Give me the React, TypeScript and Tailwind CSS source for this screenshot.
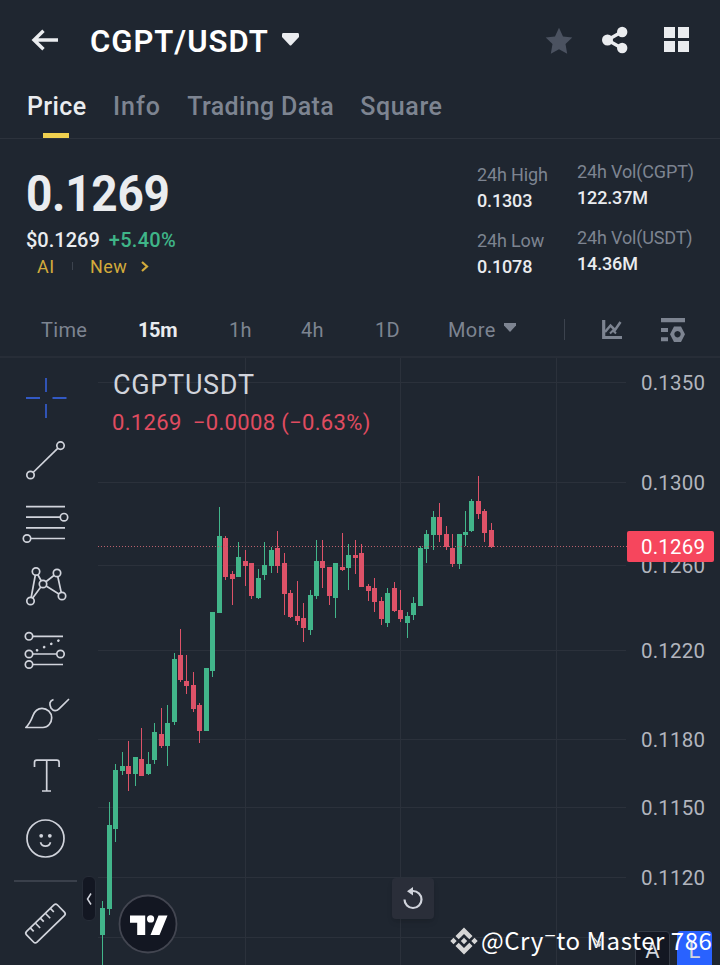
import { useState } from 'react';

type Candle = [x: number, high: number, top: number, bottom: number, low: number, up: 0 | 1];

const candles: Candle[] = [
  [102.5, 901, 908, 935, 966, 1],
  [109.5, 802, 825, 909, 915, 1],
  [115.5, 764, 770, 829, 842, 1],
  [122.5, 752, 766, 771, 775, 1],
  [128.5, 741, 766, 774, 791, 0],
  [135.5, 757, 757, 774, 786, 1],
  [141.5, 728, 759, 776, 776, 0],
  [148.5, 752, 764, 774, 775, 1],
  [154.5, 723, 732, 760, 764, 1],
  [161.5, 708, 734, 746, 748, 0],
  [167.5, 705, 723, 746, 766, 1],
  [174.5, 653, 659, 722, 725, 1],
  [180.5, 629, 655, 680, 682, 0],
  [186.5, 655, 681, 686, 694, 0],
  [193.5, 672, 685, 709, 712, 0],
  [199.5, 703, 705, 731, 743, 0],
  [206.5, 668, 668, 731, 731, 1],
  [212.5, 612, 612, 671, 677, 1],
  [219.5, 507, 536, 613, 613, 1],
  [225.5, 536, 538, 577, 580, 0],
  [232.5, 571, 574, 579, 605, 0],
  [238.5, 542, 557, 577, 577, 1],
  [245.5, 550, 561, 566, 586, 0],
  [251.5, 563, 563, 596, 599, 0],
  [258.5, 569, 578, 598, 599, 1],
  [264.5, 542, 565, 575, 580, 1],
  [271.5, 547, 550, 566, 573, 1],
  [277.5, 531, 548, 566, 573, 0],
  [284.5, 553, 563, 594, 615, 0],
  [290.5, 590, 593, 617, 618, 0],
  [297.5, 581, 616, 621, 625, 0],
  [303.5, 603, 618, 628, 642, 0],
  [310.5, 590, 595, 630, 635, 1],
  [316.5, 540, 561, 596, 599, 1],
  [322.5, 540, 561, 568, 588, 0],
  [329.5, 567, 567, 596, 605, 0],
  [335.5, 563, 563, 598, 618, 1],
  [342.5, 533, 567, 570, 571, 0],
  [348.5, 544, 555, 568, 590, 1],
  [355.5, 540, 555, 558, 574, 0],
  [361.5, 544, 553, 587, 587, 0],
  [368.5, 584, 586, 591, 601, 0],
  [374.5, 578, 588, 602, 612, 0],
  [381.5, 597, 601, 619, 625, 0],
  [387.5, 588, 593, 623, 627, 1],
  [394.5, 582, 588, 611, 612, 0],
  [400.5, 590, 610, 619, 622, 0],
  [407.5, 612, 616, 623, 638, 1],
  [413.5, 597, 603, 615, 620, 1],
  [420.5, 546, 548, 606, 606, 1],
  [426.5, 530, 534, 549, 563, 1],
  [433.5, 511, 517, 535, 550, 1],
  [439.5, 503, 517, 535, 542, 0],
  [446.5, 526, 534, 547, 550, 0],
  [452.5, 534, 548, 564, 567, 0],
  [459.5, 534, 534, 564, 569, 1],
  [465.5, 511, 532, 535, 546, 1],
  [471.5, 499, 501, 531, 532, 1],
  [478.5, 476, 501, 514, 519, 0],
  [484.5, 509, 511, 533, 542, 0],
  [491.5, 523, 530, 547, 548, 0],
];

const levels = [
  { y: 383, label: '0.1350' },
  { y: 483, label: '0.1300' },
  { y: 566, label: '0.1260' },
  { y: 651, label: '0.1220' },
  { y: 740, label: '0.1180' },
  { y: 808, label: '0.1150' },
  { y: 878, label: '0.1120' },
];

const tabs = [
  { name: 'Price', cls: 'tracking-[0.4px]' },
  { name: 'Info', cls: 'tracking-[1px]' },
  { name: 'Trading Data', cls: 'tracking-[0.35px]' },
  { name: 'Square', cls: 'tracking-[0.6px]' },
];

const intervals = [
  { name: 'Time', cls: 'w-[97px]' },
  { name: '15m', cls: 'w-[91px]' },
  { name: '1h', cls: 'w-[72px]' },
  { name: '4h', cls: 'w-[74px]' },
  { name: '1D', cls: 'w-[73px]' },
];

function Node({ x, y }: { x: number; y: number }) {
  return <circle cx={x} cy={y} r="3.7" fill="#1f2630" />;
}

const tools = [
  {
    name: 'cross',
    icon: <path d="M46 11v14M46 37v14M26 31h14M52.500 31h14" stroke="#3259c4" strokeWidth="1.8" />,
  },
  {
    name: 'trend',
    icon: (
      <>
        <path d="M30.500 45L60.500 15.600" />
        <Node x={60.5} y={15.6} />
        <Node x={30.5} y={45} />
      </>
    ),
  },
  {
    name: 'fib',
    icon: (
      <>
        <path d="M26 13.600h39M26 24.200h38M26 34.900h39M27 45.500h38" />
        <Node x={64} y={24.2} />
        <Node x={27} y={45.5} />
      </>
    ),
  },
  {
    name: 'pattern',
    icon: (
      <>
        <path d="M36 15.500L30.500 45L43 28L36 15.500M43 28L57 17L62 40L43 28" />
        <Node x={36} y={15.5} />
        <Node x={57} y={17} />
        <Node x={43} y={28} />
        <Node x={30.5} y={45} />
        <Node x={62} y={40} />
      </>
    ),
  },
  {
    name: 'forecast',
    icon: (
      <>
        <path d="M29 17.300h34M29 35h31M29 45.500h34" />
        <path d="M37 31.300L61 20.500" strokeWidth="2.6" strokeLinecap="round" strokeDasharray="0.1 7.700" />
        <Node x={29} y={17.3} />
        <Node x={29} y={35} />
        <Node x={60.5} y={35} />
        <Node x={29} y={45.5} />
      </>
    ),
  },
  {
    name: 'brush',
    icon: (
      <path
        d="M25.800 45.500H43c5 0 8.700-4.800 8.700-9.800S47.400 26.300 42 26.300c-5 0-7.500 3.200-9 7.200s-3.500 8.500-7.200 12zM53.500 17.500c-4 1.500-4.500 4.500-2.500 8.500c2.300 3.200 5.300 3.600 8 .8L69 17"
        strokeLinejoin="round"
      />
    ),
  },
  {
    name: 'text',
    icon: <path d="M34.500 22v-4.500q0-2.300 2.300-2.300h20q2.300 0 2.300 2.300V22M46.700 15.500V46M42 46h9" />,
  },
  {
    name: 'emoji',
    icon: (
      <>
        <circle cx="45.500" cy="30.500" r="18.500" />
        <circle cx="41.200" cy="27.800" r="1.900" fill="#d1d4dc" stroke="none" />
        <circle cx="49.800" cy="27.800" r="1.900" fill="#d1d4dc" stroke="none" />
        <path d="M40.500 34.200c1.500 5.200 8.500 5.200 10 0" />
      </>
    ),
  },
];

function Header() {
  return (
    <header className="flex h-[79px] items-center pl-[31px] pr-[31px]">
      <svg className="h-[22px] w-[28px]" viewBox="0 0 28 22" fill="none" stroke="#eaecef" strokeWidth="3.400">
        <path d="M27 11H3M12.500 1.800L3 11l9.500 9.200" />
      </svg>
      <h1 className="ml-[31px] w-[178px] whitespace-nowrap pt-1 text-[31px] font-semibold leading-none tracking-[1px] text-white">
        CGPT/USDT
      </h1>
      <svg className="ml-[14px] h-[13px] w-[17px]" viewBox="0 0 17 13" fill="#eaecef">
        <path d="M1 0h15q1 0 1 1.500v2.500L9.500 12q-1 1-2 0L0 4V1.500Q0 0 1 0z" />
      </svg>
      <div className="ml-auto flex items-center">
        <svg className="mt-[2px] h-[28px] w-[28px]" viewBox="0 0 28 28" fill="#4b5260">
          <path d="M14 .8l4 8.600 9.300 1.200-6.800 6.500 1.700 9.700L14 22.300 5.800 26.800l1.700-9.700L.7 10.600 10 9.400z" />
        </svg>
        <svg className="ml-[28px] h-[28px] w-[27px]" viewBox="0 0 27 28" fill="#eaecef" stroke="#eaecef">
          <path d="M20.500 6L6.500 14l14 8" fill="none" strokeWidth="3.400" />
          <circle cx="21.200" cy="6" r="5.200" stroke="none" />
          <circle cx="6.500" cy="14" r="5.500" stroke="none" />
          <circle cx="21.200" cy="22" r="5.200" stroke="none" />
        </svg>
        <svg className="ml-[36px] h-[25px] w-[25px]" viewBox="0 0 25 25" fill="#eaecef">
          <path d="M0 0h11v11H0zM14 0h11v11H14zM0 14h11v11H0zM14 14h11v11H14z" />
        </svg>
      </div>
    </header>
  );
}

function Stat({ label, value }: { label: string; value: string }) {
  return (
    <div className="h-[66px] whitespace-nowrap">
      <div className="text-[18px] leading-[26px] tracking-[-0.15px] text-[#7d8491]">{label}</div>
      <div className="text-[18px] font-medium leading-[26px] tracking-[-0.15px] text-[#eaecef]">{value}</div>
    </div>
  );
}

function PriceSummary() {
  return (
    <section className="flex h-[164px]">
      <div className="w-[477px] pl-[26px] pt-[30px]">
        <div className="origin-left scale-x-[0.92] text-[50px] font-bold leading-[50px] tracking-[-0.3px] text-[#eaecef]">0.1269</div>
        <div className="mt-[8px] flex h-[26px] items-center gap-[9px] text-[20px] font-medium">
          <span className="text-[#eaecef]">$0.1269</span>
          <span className="tracking-[0.3px] text-[#3fb588]">+5.40%</span>
        </div>
        <div className="flex h-[26px] items-center pl-[11px] text-[18px] tracking-[0.4px] text-[#d3ab3b]">
          <span className="w-[19px]">AI</span>
          <span className="ml-[16px] h-[8px] w-px bg-[#3c434e]" />
          <span className="ml-[17px]">New</span>
          <svg className="ml-[14px] h-[11px] w-[8px]" viewBox="0 0 8 11" fill="none" stroke="currentColor" strokeWidth="2.200">
            <path d="M1 1l5 4.500-5 4.500" />
          </svg>
        </div>
      </div>
      <div className="w-[100px] pt-[23px]">
        <Stat label="24h High" value="0.1303" />
        <Stat label="24h Low" value="0.1078" />
      </div>
      <div className="pt-[20px]">
        <Stat label="24h Vol(CGPT)" value="122.37M" />
        <Stat label="24h Vol(USDT)" value="14.36M" />
      </div>
    </section>
  );
}

function IntervalBar({ active, onSelect }: { active: string; onSelect: (name: string) => void }) {
  return (
    <div className="flex h-[55px] items-center border-b-2 border-[#272d37] pl-[41px] text-[20px] text-[#7d8491]">
      {intervals.map((item) => (
        <button
          key={item.name}
          onClick={() => onSelect(item.name)}
          className={`${item.cls} text-left ${item.name === active ? 'font-bold tracking-[-0.4px] text-[#eaecef]' : 'tracking-[0.3px]'}`}
        >
          {item.name}
        </button>
      ))}
      <button className="flex w-[116px] items-center gap-[8px] tracking-[0.4px]">
        More
        <svg className="-mt-[4px] h-[9px] w-[12px]" viewBox="0 0 12 9" fill="currentColor">
          <path d="M0 0h12v2.500L6 9 0 2.500z" />
        </svg>
      </button>
      <span className="h-[21px] w-px bg-[#3c434e]" />
      <svg className="ml-[37px] h-[21px] w-[20px]" viewBox="0 0 20 21" fill="none" stroke="currentColor">
        <path d="M1.700 1v17.500H20" strokeWidth="3.200" />
        <path d="M3 13l5.500-6.500 4.500 4.500L18.500 3" strokeWidth="2.500" />
        <path d="M8 14.500l3-3 3 3" strokeWidth="2" />
      </svg>
      <svg className="ml-[38px] h-[26px] w-[26px]" viewBox="0 0 26 26" fill="currentColor">
        <path d="M1 1h24v4.300H1zM1 11h7v4H1zM1 20.300h7v4H1z" />
        <path fillRule="evenodd" d="M14 9.500h7l4 7.700-4 7.800h-7l-4-7.800zM17.500 14a3.200 3.200 0 1 0 .01 0z" />
      </svg>
    </div>
  );
}

function Chart() {
  return (
    <svg className="block h-[607px] w-[628px]" viewBox="92 358 628 607">
      <g stroke="#2b313b" strokeWidth="1">
        {levels.map((level) => (
          <path key={level.label} d={`M98 ${level.y - 0.5}H626`} />
        ))}
        <path d="M98 937.500H626M245.500 357V965M400.500 357V965M556.500 357V965" />
      </g>
      {candles.map(([x, high, top, bottom, low, up]) => (
        <g key={x} fill={up ? '#42b58a' : '#dd5268'}>
          <rect x={x - 0.5} y={high} width="1" height={low - high} />
          <rect x={x - 2.5} y={top} width="5" height={bottom - top} />
        </g>
      ))}
      <path d="M98 546.500H627" stroke="#b9606c" strokeDasharray="1 2" />
      <g fill="#b2b5be" fontSize="20.500">
        {levels.map((level) => (
          <text key={level.label} x="641" y={level.y + 7} textLength="64">
            {level.label}
          </text>
        ))}
      </g>
      <rect x="627" y="531" width="87" height="31" rx="2" fill="#f6465d" />
      <text x="641" y="554" fontSize="20.500" fill="#fff" textLength="64">
        0.1269
      </text>
      <circle cx="148" cy="924" r="28.500" fill="#131722" stroke="#434651" strokeWidth="1.800" />
      <path d="M130 915.500h15.200V935h-8v-12.300H130zM158.500 915.500h9L159.500 935h-9z" fill="#fff" />
      <circle cx="150.600" cy="918.900" r="3.600" fill="#fff" />
    </svg>
  );
}

function Toolbar() {
  return (
    <aside className="w-[92px] pt-[9px]">
      {tools.map((tool) => (
        <svg key={tool.name} className="block h-[63px] w-[92px]" viewBox="0 0 92 63" fill="none" stroke="#d1d4dc" strokeWidth="1.700">
          {tool.icon}
        </svg>
      ))}
      <div className="ml-[14px] mt-[9px] h-[2px] w-[63px] bg-[#3a404b]" />
      <svg className="block h-[80px] w-[92px]" viewBox="0 882 92 80" fill="none" stroke="#d1d4dc" strokeWidth="1.700">
        <g transform="rotate(-44 45.500 923.500)">
          <rect x="24" y="916" width="43" height="15" rx="2.500" />
          <path d="M31.500 916v5M38.500 916v7M45.500 916v5M52.500 916v7M59.500 916v5" />
        </g>
      </svg>
    </aside>
  );
}

export default function App() {
  const [tab, setTab] = useState('Price');
  const [interval, setInterval] = useState('15m');

  return (
    <div className="relative h-[965px] w-[720px] overflow-hidden bg-[#1f2630] font-[Roboto,sans-serif]">
      <Header />
      <nav className="flex h-[60px] gap-[26.3px] border-b border-[#2c323c] pl-[27px] text-[25px] font-medium">
        {tabs.map((item) => (
          <button
            key={item.name}
            onClick={() => setTab(item.name)}
            className={`flex flex-col items-center whitespace-nowrap pt-[10px] ${item.cls} ${item.name === tab ? 'text-[#eaecef]' : 'text-[#7d8491]'}`}
          >
            <span className="leading-[36px]">{item.name}</span>
            {item.name === tab && <span className="mr-[2px] mt-[8px] h-[5px] w-[26px] bg-[#f0d04f]" />}
          </button>
        ))}
      </nav>
      <PriceSummary />
      <IntervalBar active={interval} onSelect={setInterval} />

      <main className="flex h-[607px]">
        <Toolbar />
        <Chart />
      </main>

      {/* Symbol legend over the chart */}
      <div className="absolute left-[112px] top-[368px] whitespace-nowrap">
        <div className="pl-px text-[27px] leading-[34px] tracking-[0.7px] text-[#d1d4dc]">CGPTUSDT</div>
        <div className="mt-[7px] flex gap-[11px] text-[22px] leading-[28px] tracking-[0.35px] text-[#e04c60]">
          <span>0.1269</span>
          <span>−0.0008 (−0.63%)</span>
        </div>
      </div>

      <button className="absolute left-[82px] top-[876px] flex h-[45px] w-[14px] items-center justify-center rounded-[6px] border border-[#262c37] bg-[#131722]">
        <svg className="h-[12px] w-[6px] shrink-0" viewBox="0 0 6 12" fill="none" stroke="#d1d4dc" strokeWidth="1.500">
          <path d="M5 .5L1.500 6 5 11.500" />
        </svg>
      </button>

      <button className="absolute left-[392px] top-[878px] flex h-[41px] w-[42px] items-center justify-center rounded-[4px] bg-[#2a2e39] shadow-md">
        <svg className="h-[24px] w-[24px]" viewBox="0 0 24 24" fill="none" stroke="#d1d4dc" strokeWidth="2.200">
          <path d="M3.500 12.500a8.500 8.500 0 1 0 8.500-8.500H9" />
          <path d="M12 0v8.500L6 4.300z" fill="#d1d4dc" stroke="none" />
        </svg>
      </button>

      {/* Scale mode buttons, cut by the bottom edge */}
      <div className="absolute left-[635px] top-[931px] flex h-[34px] gap-[7px] overflow-hidden text-[22px] leading-[38px] text-[#d1d4dc]">
        <button className="h-[40px] w-[35px] rounded-[4px] border border-[#353a45] bg-[#131722]">A</button>
        <button className="h-[40px] w-[35px] rounded-[4px] bg-[#2962ff]">L</button>
      </div>

      <div className="absolute left-[450px] top-[924px] flex h-[34px] items-center whitespace-nowrap">
        <svg className="h-[28px] w-[28px]" viewBox="0 0 28 28" fill="#d6d6d6">
          <path d="M14 .5l8.500 8.500-3.200 3.200L14 6.900l-5.300 5.300L5.500 9zM14 27.500l8.500-8.500-3.200-3.200-5.300 5.300-5.300-5.300L5.500 19z" />
          <path d="M14 10.800l3.200 3.200-3.200 3.200-3.200-3.200zM3.500 10.800L6.700 14l-3.200 3.200L.3 14zM24.500 10.800l3.200 3.200-3.200 3.200-3.200-3.200z" />
        </svg>
        <span className="-mt-[2px] ml-[3px] font-['Noto_Sans_CJK_SC',sans-serif] text-[24px] leading-[34px] tracking-[0.55px] text-white">
          @Cry<span className="mx-[2px] inline-block scale-x-[1.5]">⁻</span>to Master 786
        </span>
        {/* pointer mark lying over the caption */}
        <svg className="absolute left-[143px] top-[13px] h-[11px] w-[10px]" viewBox="0 0 10 11" fill="none" stroke="#d6d6d6" strokeWidth="1.300">
          <path d="M1 1l6 8M7 9V4M7 9H2" />
        </svg>
      </div>
    </div>
  );
}
